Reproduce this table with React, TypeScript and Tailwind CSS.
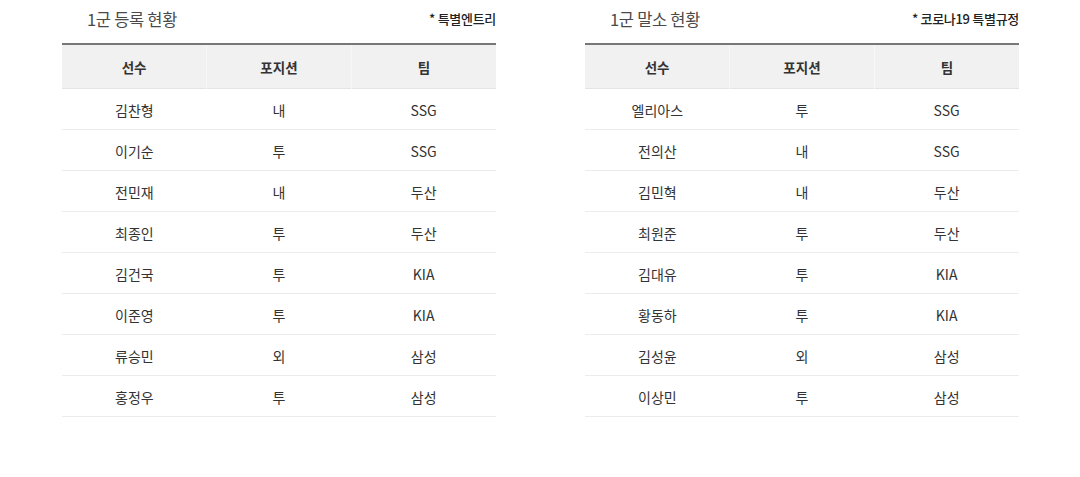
import React from 'react';

type Row = { name: string; pos: string; team: string };

const registered: Row[] = [
  { name: '김찬형', pos: '내', team: 'SSG' },
  { name: '이기순', pos: '투', team: 'SSG' },
  { name: '전민재', pos: '내', team: '두산' },
  { name: '최종인', pos: '투', team: '두산' },
  { name: '김건국', pos: '투', team: 'KIA' },
  { name: '이준영', pos: '투', team: 'KIA' },
  { name: '류승민', pos: '외', team: '삼성' },
  { name: '홍정우', pos: '투', team: '삼성' },
];

const released: Row[] = [
  { name: '엘리아스', pos: '투', team: 'SSG' },
  { name: '전의산', pos: '내', team: 'SSG' },
  { name: '김민혁', pos: '내', team: '두산' },
  { name: '최원준', pos: '투', team: '두산' },
  { name: '김대유', pos: '투', team: 'KIA' },
  { name: '황동하', pos: '투', team: 'KIA' },
  { name: '김성윤', pos: '외', team: '삼성' },
  { name: '이상민', pos: '투', team: '삼성' },
];

function RosterTable({ title, note, rows }: { title: string; note: string; rows: Row[] }) {
  return (
    <div className="w-[434px]">
      {/* Title bar */}
      <div className="flex items-center justify-between h-[43px] pb-[5px]">
        <h2 className="pl-[25px] text-[16.5px] text-[#4a4a4a] font-normal tracking-[-0.3px]">{title}</h2>
        <span className="text-[13px] font-medium text-[#222] tracking-[-0.3px]">{note}</span>
      </div>

      <table className="w-full table-fixed border-collapse border-t-2 border-[#777]">
        <thead>
          <tr className="h-[44px] bg-[#f1f1f1] border-b border-[#e4e4e4]">
            <th className="pt-[2px] font-bold text-[13.5px] text-[#333] border-r border-[#f7f7f7]">선수</th>
            <th className="pt-[2px] font-bold text-[13.5px] text-[#333] border-r border-[#f7f7f7]">포지션</th>
            <th className="pt-[2px] font-bold text-[13.5px] text-[#333]">팀</th>
          </tr>
        </thead>
        <tbody>
          {rows.map(r => (
            <tr key={r.name} className="h-[41px] border-b border-[#ececec]">
              <td className="pt-[3px] text-center text-[14px] text-[#333]">{r.name}</td>
              <td className="pt-[3px] text-center text-[14px] text-[#333]">{r.pos}</td>
              <td className="pt-[3px] text-center text-[14px] text-[#333]">{r.team}</td>
            </tr>
          ))}
        </tbody>
      </table>
    </div>
  );
}

export default function App() {
  return (
    <div
      className="w-[1080px] h-[477px] bg-white flex gap-[89px] pl-[62px]"
      style={{ fontFamily: '"Noto Sans CJK KR", "Noto Sans", sans-serif' }}
    >
      <RosterTable title="1군 등록 현황" note="* 특별엔트리" rows={registered} />
      <RosterTable title="1군 말소 현황" note="* 코로나19 특별규정" rows={released} />
    </div>
  );
}
